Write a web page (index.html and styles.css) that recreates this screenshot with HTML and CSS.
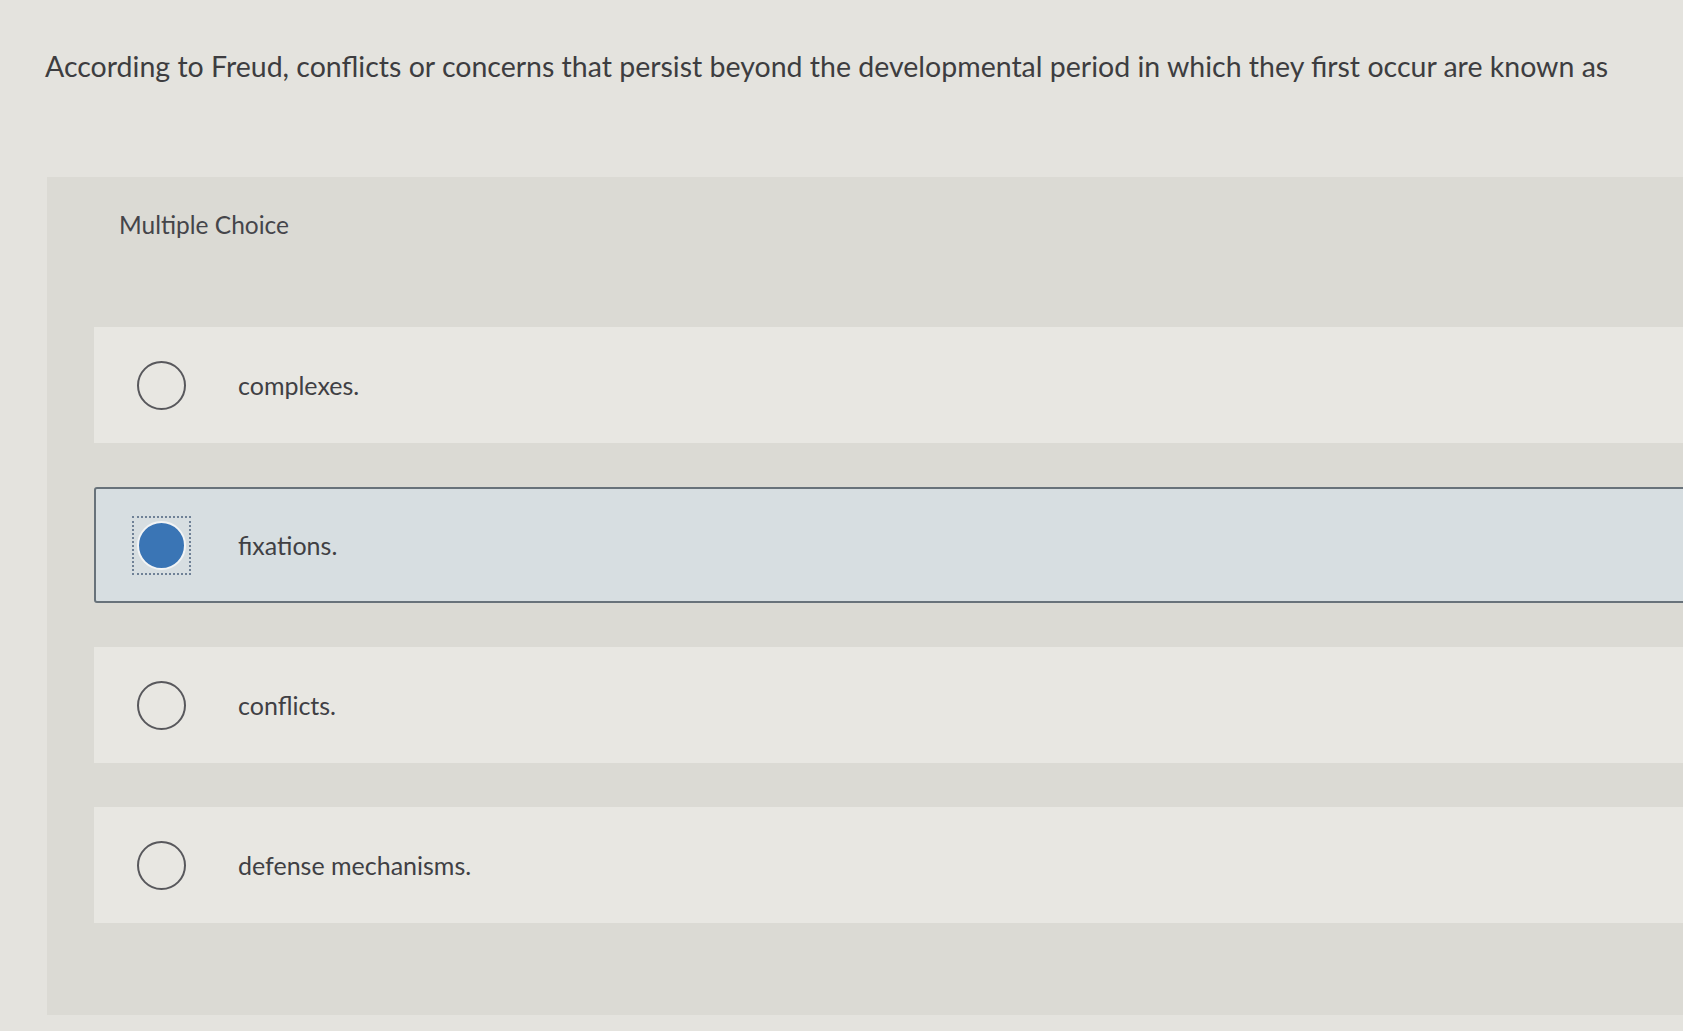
FILE: index.html
```html
<!DOCTYPE html>
<html lang="en">
<head>
    <meta charset="UTF-8">
    <meta name="viewport" content="width=device-width, initial-scale=1.0">
    <title>Question</title>
    <link rel="stylesheet" href="styles.css">
</head>
<body>
    <div class="page">
        <p class="prompt">According to Freud, conflicts or concerns that persist beyond the developmental period in which they first occur are known as</p>

        <div class="choices">
            <div class="choices-title">Multiple Choice</div>

            <label class="option">
                <span class="radio"></span>
                <span class="option-text">complexes.</span>
            </label>

            <label class="option selected">
                <span class="focus-ring"><span class="radio checked"></span></span>
                <span class="option-text">fixations.</span>
            </label>

            <label class="option">
                <span class="radio"></span>
                <span class="option-text">conflicts.</span>
            </label>

            <label class="option">
                <span class="radio"></span>
                <span class="option-text">defense mechanisms.</span>
            </label>
        </div>
    </div>
</body>
</html>
```

FILE: styles.css
```css
html, body {
    margin: 0;
    height: 100%;
    overflow: hidden;
}
body {
    background: #e4e3de;
    font-family: Lato, "Liberation Sans", sans-serif;
    color: #3d3d40;
}
.page {
    padding: 49px 0 0 45px;
}
.prompt {
    margin: 0;
    font-size: 28.5px;
    line-height: 34px;
    white-space: nowrap;
}
.choices {
    margin: 94px 0 0 2px;
    width: calc(100% + 80px);
    height: 838px;
    box-sizing: border-box;
    padding: 34px 0 0 47px;
    background: #dbdad4;
}
.choices-title {
    margin-left: 25px;
    font-size: 24.5px;
    line-height: 28px;
    color: #45454a;
}
.option {
    display: flex;
    align-items: center;
    gap: 52px;
    height: 116px;
    box-sizing: border-box;
    padding: 0 43px;
    margin-bottom: 44px;
    background: #e8e7e2;
    font-size: 25px;
    cursor: pointer;
}
.choices-title + .option {
    margin-top: 88px;
}
.option.selected {
    background: #d7dee1;
    border: 2px solid #68727a;
    border-radius: 3px;
    padding-left: 41px;
}
.radio {
    width: 49px;
    height: 49px;
    box-sizing: border-box;
    border: 2px solid #58585c;
    border-radius: 50%;
    flex-shrink: 0;
}
/* square dotted keyboard-focus box around the checked radio */
.focus-ring {
    display: flex;
    padding: 3px;
    margin: -5px;
    border: 2px dotted #6f8196;
    flex-shrink: 0;
}
.radio.checked {
    background: #3a75b5;
    border: 2px solid #f2f4f5;
}
.option-text {
    color: #404044;
}
```
